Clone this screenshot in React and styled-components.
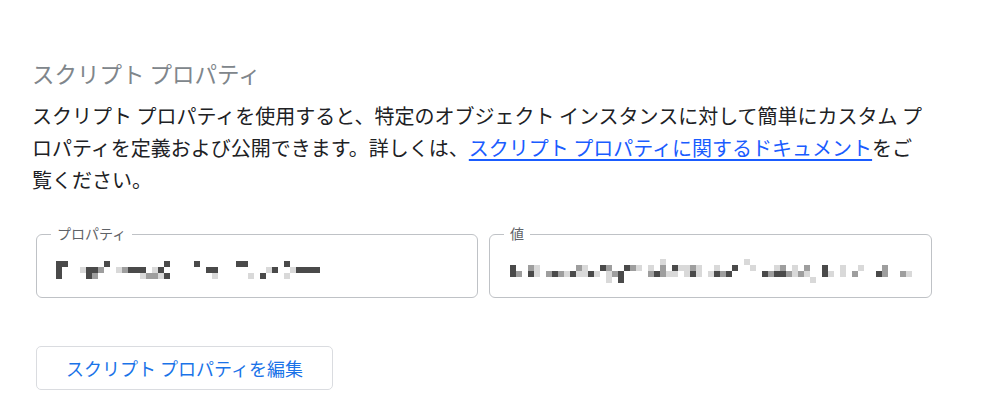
import React from "react";
import styled, { createGlobalStyle } from "styled-components";

const GlobalStyle = createGlobalStyle`
  html, body {
    margin: 0;
    padding: 0;
    background: #ffffff;
  }
  body {
    font-family: "Noto Sans CJK JP", "Noto Sans", sans-serif;
    color: #202124;
  }
`;

// obscured values: one string per row, one char per 6px cell
// ' ' empty, '.' light, '-' mid, '#' dark
const PROPERTY_MOSAIC = [
  "##      #         #    #      ##      #   ",
  "#   .##-  .-### .#       ##        .#  .####",
  "#    #-       .--.#       .     . #   .   ",
];

const VALUE_MOSAIC = [
  "                         .             .                          ",
  "#  -.      -.  #-  #-. . - #..-.  .  #  .   .- . -  #  .  .   -     ",
  "#- #. -#-.#..#. .-#    -#-.. .#. .#-#     #-##-.-.  #. . -   #-  -.",
  "                . #                               .                ",
];

const SHADES = { ".": "#d9d9d9", "-": "#9e9e9e", "#": "#4a4a4a" };

function Mosaic({ rows }) {
  const cols = Math.max(...rows.map((r) => r.length));
  const cells = [];
  rows.forEach((row, y) => {
    row.split("").forEach((ch, x) => {
      if (SHADES[ch]) {
        cells.push(
          <rect key={`${x}-${y}`} x={x * 6} y={y * 6} width="6" height="6" fill={SHADES[ch]} />
        );
      }
    });
  });
  return (
    <svg width={cols * 6} height={rows.length * 6} aria-hidden="true">
      {cells}
    </svg>
  );
}

function Field(props) {
  const { label, rows, shift } = props;
  return (
    <FieldBox>
      <FieldLabel>{label}</FieldLabel>
      <FieldValue $shift={shift}>
        <Mosaic rows={rows} />
      </FieldValue>
    </FieldBox>
  );
}

function App() {
  return (
    <>
      <GlobalStyle />
      <Page>
        <Title>スクリプト プロパティ</Title>
        <Description>
          スクリプト プロパティを使用すると、特定のオブジェクト インスタンスに対して簡単にカスタム プロパティを定義および公開できます。詳しくは、
          <DocLink href="#">スクリプト プロパティに関するドキュメント</DocLink>
          をご覧ください。
        </Description>
        <Fields>
          <Field label="プロパティ" rows={PROPERTY_MOSAIC} shift={0} />
          <Field label="値" rows={VALUE_MOSAIC} shift={1} />
        </Fields>
        <EditButton type="button">スクリプト プロパティを編集</EditButton>
      </Page>
    </>
  );
}

const Page = styled.div`
  padding: 59px 32px 0 32px;
  display: flex;
  flex-direction: column;
  align-items: flex-start;
`;

const Title = styled.h2`
  margin: 0;
  font-size: 22.5px;
  line-height: 29px;
  font-weight: 400;
  color: #80868b;
`;

const Description = styled.p`
  margin: 12px 0 0 0;
  width: 898px;
  font-size: 20px;
  line-height: 32px;
  color: #202124;
`;

const DocLink = styled.a`
  color: #1a5cff;
  text-decoration: underline;
  text-underline-offset: 3px;
`;

const Fields = styled.div`
  margin: 38px 0 0 4px;
  width: 896px;
  display: grid;
  grid-template-columns: 442px 443px;
  column-gap: 11px;
`;

const FieldBox = styled.div`
  position: relative;
  box-sizing: border-box;
  height: 64px;
  border: 1px solid #bfc2c6;
  border-radius: 6px;
  display: flex;
  align-items: center;
`;

const FieldLabel = styled.span`
  position: absolute;
  top: -12px;
  left: 14px;
  padding: 0 6px;
  background: #ffffff;
  font-size: 14px;
  line-height: 20px;
  color: #5f6368;
`;

const FieldValue = styled.div`
  padding-left: ${(p) => 19 + p.$shift}px;
  padding-top: ${(p) => (p.$shift ? 10 : 8)}px;
  display: flex;
  svg {
    display: block;
  }
`;

const EditButton = styled.button`
  margin: 48px 0 0 4px;
  box-sizing: border-box;
  width: 297px;
  height: 44px;
  border: 1px solid #dadce0;
  border-radius: 5px;
  background: #ffffff;
  font-family: "Noto Sans CJK JP", "Noto Sans", sans-serif;
  font-size: 18px;
  color: #1a73e8;
  cursor: pointer;
`;

export default App;
